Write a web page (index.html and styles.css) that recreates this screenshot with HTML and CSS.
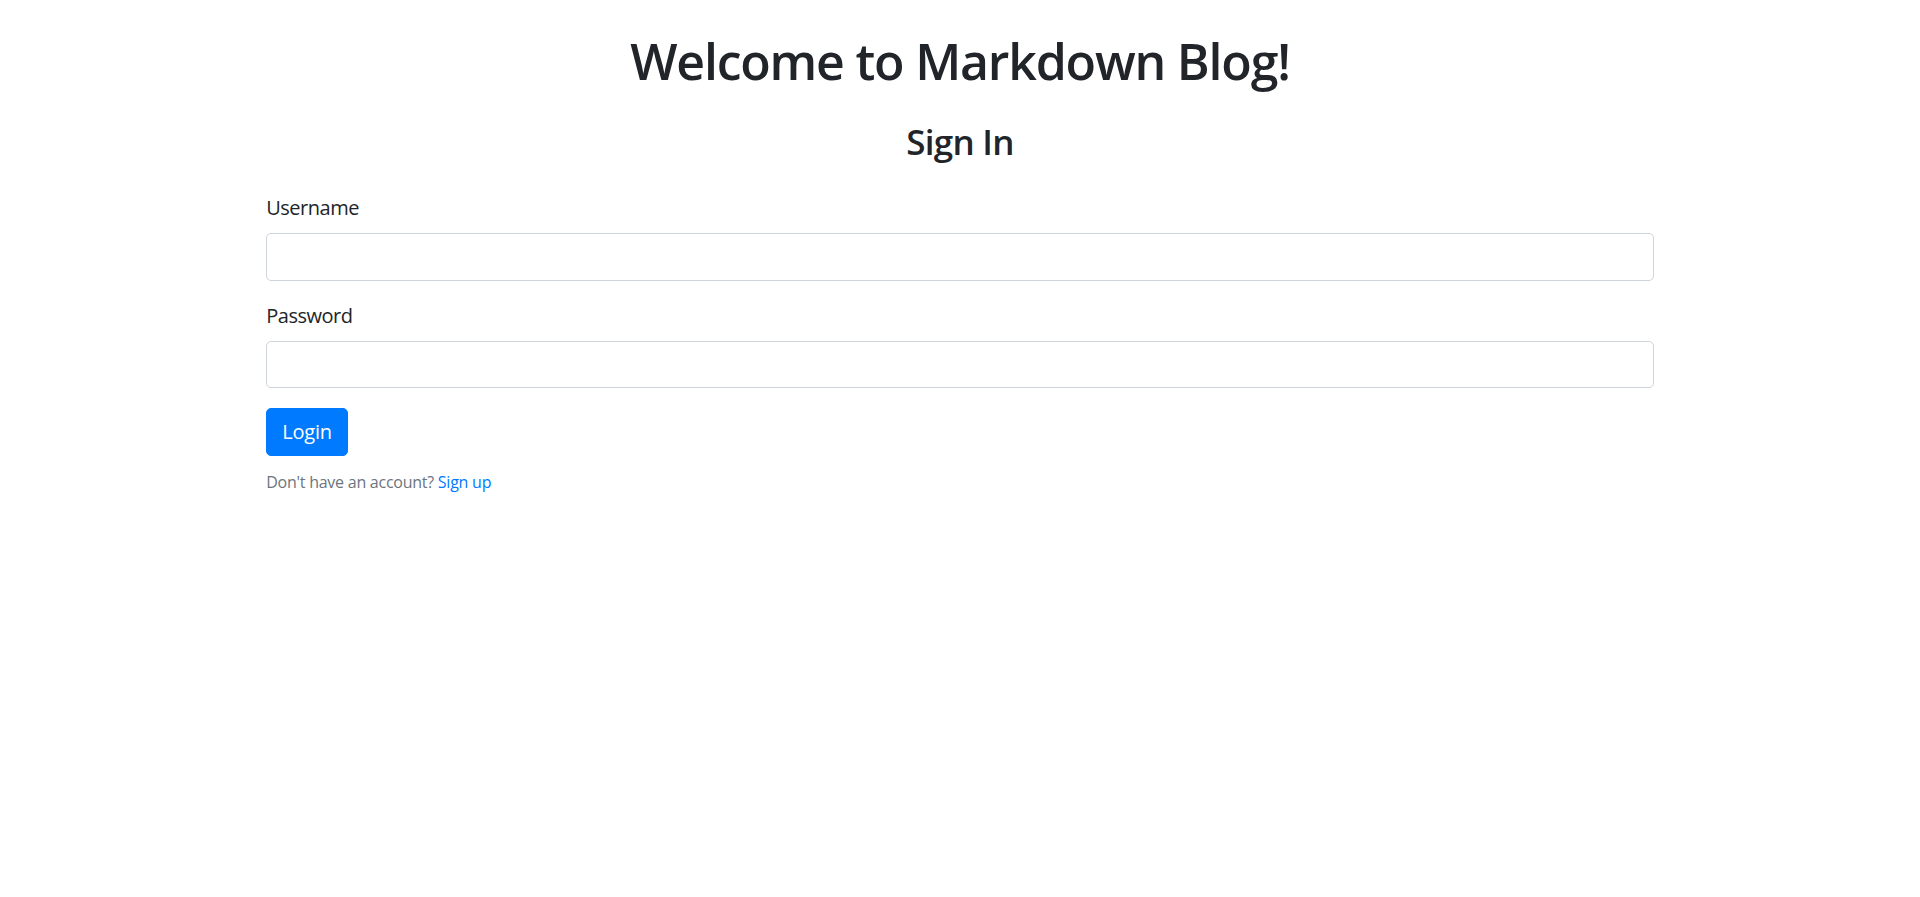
FILE: index.html
```html
<!DOCTYPE html>
<html lang="en">
<head>
<meta charset="utf-8">
<title>Markdown Blog - Sign In</title>
<link rel="stylesheet" href="styles.css">
</head>
<body>
<div class="container">
  <h1 class="title">Welcome to Markdown Blog!</h1>
  <h3 class="subtitle">Sign In</h3>
  <form class="form">
    <div class="form-group">
      <label class="label" for="username">Username</label>
      <input class="input" type="text" id="username">
    </div>
    <div class="form-group">
      <label class="label" for="password">Password</label>
      <input class="input" type="password" id="password">
    </div>
    <button class="btn" type="button">Login</button>
    <p class="hint">Don't have an account? <a class="link" href="#">Sign up</a></p>
  </form>
</div>
</body>
</html>
```
FILE: styles.css
```css
html, body {
  margin: 0;
  padding: 0;
  background: #fff;
}
body {
  font-family: "Open Sans", "Noto Sans", sans-serif;
  font-size: 20px;
  line-height: 1.5;
  color: #212529;
}
.container {
  max-width: 1425px;
  margin: 0 auto;
  padding: 31px 18.75px 0;
  box-sizing: border-box;
}
.title {
  margin: 0 0 30px;
  font-size: 50px;
  font-weight: 600;
  letter-spacing: -1.2px;
  line-height: 60px;
  text-align: center;
}
.subtitle {
  margin: 0 0 30px;
  font-size: 35px;
  font-weight: 600;
  letter-spacing: -0.7px;
  line-height: 42px;
  text-align: center;
}
.form {
  display: flex;
  flex-direction: column;
  align-items: flex-start;
}
.form-group {
  align-self: stretch;
  display: flex;
  flex-direction: column;
  margin-bottom: 20px;
}
.label {
  display: block;
  margin-bottom: 10px;
  line-height: 30px;
  letter-spacing: -0.5px;
}
.input {
  box-sizing: border-box;
  height: 47.5px;
  padding: 7.5px 15px;
  font: inherit;
  color: #495057;
  background: #fff;
  border: 1.25px solid #ced4da;
  border-radius: 5px;
  outline: none;
}
.btn {
  box-sizing: border-box;
  height: 47.5px;
  padding: 0 15px;
  font: inherit;
  letter-spacing: -0.2px;
  color: #fff;
  background: #007bff;
  border: 1.25px solid #007bff;
  border-radius: 5px;
  cursor: pointer;
}
.hint {
  margin: 14px 0 0;
  font-size: 16px;
  line-height: 24px;
  letter-spacing: -0.25px;
  color: #6c757d;
}
.link {
  color: #007bff;
  text-decoration: none;
}
```
